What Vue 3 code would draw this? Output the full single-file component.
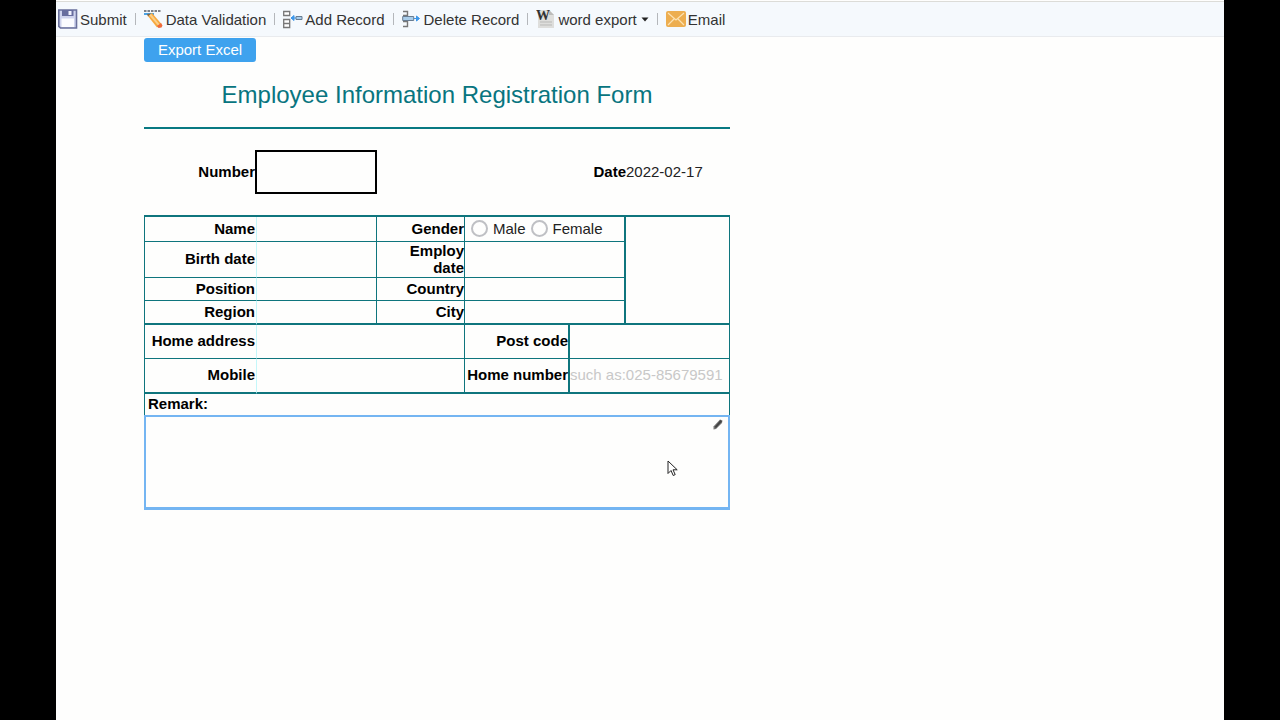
<template>
  <div class="screen">
    <main class="page">
      <nav class="toolbar">
        <button type="button" class="tool">
          <svg width="20" height="20" viewBox="0 0 20 20">
            <path d="M.8 1h17.700v18H2.500L.8 17.300z" fill="#cfd4ee" stroke="#6a709c" stroke-width="1.600" />
            <path d="M4 1h11.500v6H4z" fill="#686e9f" />
            <path d="M10.500 2h3v4h-3z" fill="#f2f4ff" />
            <path d="M3.500 9.500h12.500V18H3.500z" fill="#fbfcff" />
          </svg>
          Submit
        </button>
        <span class="divider"></span>
        <button type="button" class="tool">
          <svg width="20" height="20" viewBox="0 0 20 20">
            <path d="M0 2h17" stroke="#555b63" stroke-width="1.300" stroke-dasharray="2.500 1" />
            <path d="M0 5h10" stroke="#4aa3e6" stroke-width="2" />
            <path d="M3.500 6.500L8 4l9.500 11-4.500 3.500z" fill="#f7a93f" />
            <path d="M5 6l2-1 9 11-1.500 1z" fill="#fbd08a" />
            <path d="M3 5l4-.500-3 3z" fill="#7d6a50" />
            <path d="M13 17l4-3 1.500 2.500-1 2-3 .500z" fill="#ee6b3b" />
          </svg>
          Data Validation
        </button>
        <span class="divider"></span>
        <button type="button" class="tool">
          <svg width="20" height="20" viewBox="0 0 20 20">
            <g fill="#fff" stroke="#777" stroke-width="1.300">
              <path d="M.7 2.500h6v4h-6zM.7 10.500h6v4h-6zM.7 14.500h6v4h-6z" />
            </g>
            <path d="M8 9h5M11 6.500L8 9l3 2.500z" fill="#3d97ea" stroke="#3d97ea" />
            <path d="M13 7.500h6v3h-6z" fill="#a9cdea" stroke="#687c91" />
          </svg>
          Add Record
        </button>
        <span class="divider"></span>
        <button type="button" class="tool">
          <svg width="20" height="20" viewBox="0 0 20 20">
            <path d="M1 2.500h4.500v4.500M1 17.500h4.500V12M1 6.500h4.500M1 12.500h4.500" fill="none" stroke="#777" stroke-width="1.400" />
            <path d="M.7 7.500h11v4H.7z" fill="#a9cdea" stroke="#687c91" />
            <path d="M12 9.500h5M14.500 7l3 2.500-3 2.500z" fill="#3d97ea" stroke="#3d97ea" />
          </svg>
          Delete Record
        </button>
        <span class="divider"></span>
        <button type="button" class="tool">
          <svg width="20" height="20" viewBox="0 0 20 20">
            <path d="M2 1h11l5 5v13H2z" fill="#dededc" />
            <path d="M13 1v5h5z" fill="#bcbcba" />
            <path d="M4 13h12M4 16h12" stroke="#b9b9b7" />
            <text x="0" y="11" class="glyph">W</text>
          </svg>
          <span class="word">word export</span>
          <svg width="8" height="6" viewBox="0 0 8 6">
            <path d="M.5 1.500h7L4 5.500z" fill="#222" />
          </svg>
        </button>
        <span class="divider"></span>
        <button type="button" class="tool">
          <svg width="20" height="20" viewBox="0 0 20 20">
            <rect x="0" y="2" width="20" height="16" rx="2" fill="#edae50" />
            <path d="M2 4l8 7 8-7M2 16l6-6M18 16l-6-6" fill="none" stroke="#fce2b2" stroke-width="1.200" />
          </svg>
          Email
        </button>
      </nav>

      <form class="sheet" @submit.prevent>
        <button type="button" class="export">Export Excel</button>
        <h1>Employee Information Registration Form</h1>

        <div class="meta">
          <label for="number" class="number-label">Number</label>
          <input id="number" v-model="form.number" class="number" type="text" />
          <label for="date" class="date-label">Date</label>
          <input id="date" v-model="form.date" class="date" type="text" />
        </div>

        <div class="grid">
          <label for="name" class="cell soft">Name</label>
          <div class="cell"><input id="name" v-model="form.name" type="text" /></div>
          <span id="gender" class="cell">Gender</span>
          <div class="cell span-2 thick-right radios" role="radiogroup" aria-labelledby="gender">
            <label v-for="option in genders" :key="option">
              <input v-model="form.gender" type="radio" name="gender" :value="option" />{{ option }}
            </label>
          </div>
          <div class="cell photo thick-bottom"></div>

          <label for="birth" class="cell soft">Birth date</label>
          <div class="cell"><input id="birth" v-model="form.birth" type="text" /></div>
          <label for="employ" class="cell">Employ date</label>
          <div class="cell span-2 thick-right"><input id="employ" v-model="form.employ" type="text" /></div>

          <label for="position" class="cell soft">Position</label>
          <div class="cell"><input id="position" v-model="form.position" type="text" /></div>
          <label for="country" class="cell">Country</label>
          <div class="cell span-2 thick-right"><input id="country" v-model="form.country" type="text" /></div>

          <label for="region" class="cell soft thick-bottom">Region</label>
          <div class="cell thick-bottom"><input id="region" v-model="form.region" type="text" /></div>
          <label for="city" class="cell thick-bottom">City</label>
          <div class="cell span-2 thick-right thick-bottom"><input id="city" v-model="form.city" type="text" /></div>

          <label for="address" class="cell soft">Home address</label>
          <div class="cell span-2"><input id="address" v-model="form.address" type="text" /></div>
          <label for="post" class="cell thick-right">Post code</label>
          <div class="cell span-2"><input id="post" v-model="form.post" type="text" /></div>

          <label for="mobile" class="cell soft thick-bottom">Mobile</label>
          <div class="cell span-2 thick-bottom"><input id="mobile" v-model="form.mobile" type="text" /></div>
          <label for="phone" class="cell thick-right thick-bottom">Home number</label>
          <div class="cell span-2 thick-bottom">
            <input id="phone" v-model="form.phone" type="text" placeholder="such as:025-85679591" />
          </div>

          <label for="remark" class="cell remark-label">Remark:</label>
        </div>

        <div class="remark">
          <textarea id="remark" v-model="form.remark"></textarea>
          <svg class="pencil" width="12" height="12" viewBox="0 0 12 12">
            <path d="M1.500 11.500v-3L8 1.500l2.500 1L10 5l-6 6z" fill="#777" />
            <path d="M2.500 9L8.500 2l1.500 1.500-6 6.500z" fill="#444" />
          </svg>
          <svg class="cursor" width="12" height="17" viewBox="0 0 12 17">
            <path d="M1 1v12.500l3-3 2.200 5 2-.9L6 9.800h4.200z" fill="#fff" stroke="#222" />
          </svg>
        </div>
      </form>
    </main>
  </div>
</template>

<script setup>
import { reactive } from 'vue'

const genders = ['Male', 'Female']

const form = reactive({
  number: '',
  date: '2022-02-17',
  name: '',
  gender: '',
  birth: '',
  employ: '',
  position: '',
  country: '',
  region: '',
  city: '',
  address: '',
  post: '',
  mobile: '',
  phone: '',
  remark: ''
})
</script>

<style>
body {
  background: #000;
}
</style>

<style scoped>
.screen {
  box-sizing: border-box;
  min-height: 100vh;
  padding: 0 56px;
  background: #000;
  font-family: "Liberation Sans", Arial, sans-serif;
  font-size: 15px;
  line-height: 17px;
  color: #000;
}

.page {
  min-height: 100vh;
  background: #fefefd;
}

button,
input,
textarea {
  box-sizing: border-box;
  margin: 0;
  padding: 0;
  border: 0;
  outline: 0;
  border-radius: 0;
  background: transparent;
  font: inherit;
  color: inherit;
}

.toolbar {
  display: flex;
  align-items: center;
  gap: 8px;
  box-sizing: border-box;
  height: 37px;
  padding: 2px 2px 0;
  border-bottom: 1px solid #e9ebee;
  background: linear-gradient(#fefefd 1px, #dcdcd8 1px, #dcdcd8 2px, #f5f9fd 2px);
}

.tool {
  display: flex;
  align-items: center;
  gap: 2px;
  color: #333;
  white-space: nowrap;
}

.word {
  padding-right: 2px;
}

.glyph {
  font-family: "Liberation Serif", serif;
  font-size: 14px;
  font-weight: bold;
  fill: #333;
}

.divider {
  width: 1px;
  height: 12px;
  background: #b4b7bb;
}

.sheet {
  max-width: 586px;
  margin: 0 88px;
  padding-top: 1px;
}

.export {
  display: block;
  width: 112px;
  height: 24px;
  padding-bottom: 2px;
  border-radius: 3px;
  background: #3ea2ee;
  color: #fff;
}

h1 {
  margin: 0;
  padding: 18px 0;
  border-bottom: 2px solid #087982;
  font-size: 24px;
  font-weight: normal;
  line-height: 29px;
  text-align: center;
  color: #087580;
}

.meta {
  display: flex;
  align-items: center;
  padding: 21px 0;
}

.meta label {
  padding-bottom: 2px;
  font-weight: bold;
}

.number-label {
  width: 111px;
  text-align: right;
}

.number {
  width: 122px;
  height: 44px;
  padding: 0 4px;
  border: 2px solid #000;
}

.date-label {
  margin-left: auto;
}

.date {
  width: 104px;
  padding-bottom: 2px;
  color: #222;
}

.grid {
  display: grid;
  grid-template-columns: 113fr 120fr 88fr 105fr 56fr 104fr;
  grid-template-rows: 25px 36px 23px 24px 34px 35px 21px;
  border-top: 2px solid #0f757d;
}

.cell {
  display: flex;
  align-items: center;
  justify-content: flex-end;
  box-sizing: border-box;
  min-width: 0;
  padding-bottom: 2px;
  border-right: 1px solid #0f757d;
  border-bottom: 1px solid #0f757d;
  font-weight: bold;
  text-align: right;
}

.cell.soft {
  padding-right: 1px;
  border-left: 1px solid #0f757d;
  border-right-color: #c4f7fa;
}

.cell.thick-right {
  border-right-width: 2px;
}

.cell.thick-bottom {
  border-bottom-width: 2px;
}

.cell input[type="text"] {
  width: 100%;
  height: 100%;
  font-weight: normal;
}

.cell input::placeholder {
  color: #c8c8c8;
  opacity: 1;
}

.span-2 {
  grid-column: span 2;
}

.photo {
  grid-column: 6;
  grid-row: 1 / span 4;
}

.radios {
  justify-content: flex-start;
  gap: 5px;
  padding-left: 6px;
  font-weight: normal;
  color: #222;
}

.radios label {
  display: flex;
  align-items: center;
  gap: 5px;
}

.radios input {
  width: 17px;
  height: 17px;
  border: 2px solid #bfc0c4;
  border-radius: 50%;
  appearance: none;
}

.radios input:checked {
  background: #3ea2ee;
}

.remark-label {
  grid-column: 1 / -1;
  justify-content: flex-start;
  padding-left: 3px;
  border-bottom: 0;
  border-left: 1px solid #0f757d;
}

.remark {
  position: relative;
}

.remark textarea {
  display: block;
  width: 100%;
  height: 95px;
  padding: 4px;
  border: 2px solid #74b5f2;
  border-bottom-width: 3px;
  resize: none;
}

.pencil {
  position: absolute;
  top: 3px;
  right: 6px;
}

.cursor {
  position: absolute;
  top: 45px;
  right: 51px;
}
</style>
